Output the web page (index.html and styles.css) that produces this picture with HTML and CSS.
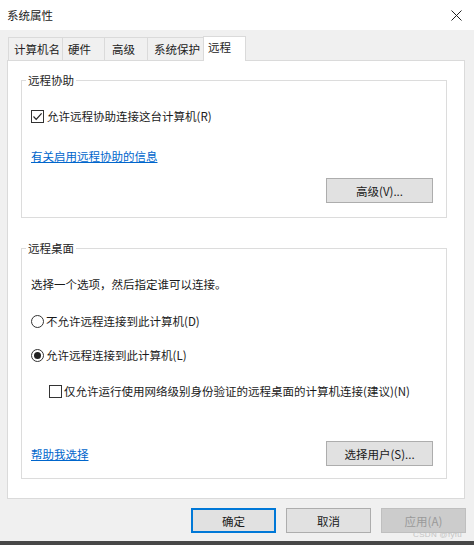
FILE: index.html
```html
<!DOCTYPE html>
<html lang="zh-CN">

<head>
    <meta charset="UTF-8">
    <title>系统属性</title>
    <link rel="stylesheet" href="styles.css">
</head>

<body>
    <div class="window">
        <div class="titlebar">
            <span class="title">系统属性</span>
            <svg class="close" width="11" height="11" viewBox="0 0 11 11">
                <path d="M0.5 0.5L10.5 10.5M10.5 0.5L0.5 10.5" stroke="#222" stroke-width="1" fill="none" />
            </svg>
        </div>

        <div class="content">
            <div class="tabs">
                <div class="tab tab-1">计算机名</div>
                <div class="tab tab-2">硬件</div>
                <div class="tab tab-3">高级</div>
                <div class="tab tab-4">系统保护</div>
                <div class="tab active">远程</div>
            </div>

            <div class="panel">
                <!-- 远程协助 -->
                <fieldset class="group group-assist">
                    <legend>远程协助</legend>
                    <label class="option">
                        <span class="checkbox checked">
                            <svg width="11" height="11" viewBox="0 0 11 11">
                                <path d="M1.5 5.5L4.2 8.3L9.6 2.4" stroke="#222" stroke-width="1.2" fill="none" />
                            </svg>
                        </span>
                        允许远程协助连接这台计算机(R)
                    </label>
                    <a class="link link-info" href="#">有关启用远程协助的信息</a>
                    <div class="row-end">
                        <button class="btn">高级(V)...</button>
                    </div>
                </fieldset>

                <!-- 远程桌面 -->
                <fieldset class="group group-desktop">
                    <legend>远程桌面</legend>
                    <p class="hint">选择一个选项，然后指定谁可以连接。</p>
                    <label class="option option-radio1">
                        <span class="radio"></span>
                        不允许远程连接到此计算机(D)
                    </label>
                    <label class="option option-radio2">
                        <span class="radio checked"></span>
                        允许远程连接到此计算机(L)
                    </label>
                    <label class="option option-nla">
                        <span class="checkbox"></span>
                        仅允许运行使用网络级别身份验证的远程桌面的计算机连接(建议)(N)
                    </label>
                    <div class="row-split">
                        <a class="link" href="#">帮助我选择</a>
                        <button class="btn">选择用户(S)...</button>
                    </div>
                </fieldset>
            </div>

            <div class="footer">
                <button class="btn btn-default">确定</button>
                <button class="btn">取消</button>
                <button class="btn btn-disabled">应用(A)</button>
                <span class="watermark">CSDN @fyfu</span>
            </div>
        </div>
    </div>
    <div class="taskbar"></div>
</body>

</html>
```

FILE: styles.css
```css
* {
    padding: 0px;
    margin: 0px;
    box-sizing: border-box;
}

body {
    width: 474px;
    height: 545px;
    overflow: hidden;
    background: #f0f0f0;
    font-family: "Noto Sans CJK SC", "Microsoft YaHei", sans-serif;
    font-size: 11.5px;
    line-height: 16px;
    color: #1a1a1a;
}

.window {
    height: 541px;
    display: flex;
    flex-direction: column;
    background: #f0f0f0;
}

.titlebar {
    height: 30px;
    background: #fff;
    display: flex;
    align-items: center;
    justify-content: space-between;
    padding: 0 12px 0 7px;
}

.title {
    color: #222;
}

.content {
    position: relative;
    flex: 1;
    padding: 0 9px 0 7px;
}

.tabs {
    display: flex;
    align-items: flex-end;
    height: 30px;
    padding-left: 1px;
}

.tab {
    height: 23px;
    padding: 3px 0 0 5px;
    border: 1px solid #dadada;
    border-bottom: none;
    border-right: none;
    background: #f0f0f0;
    color: #222;
    white-space: nowrap;
}

.tab-1 { width: 54px; }
.tab-2 { width: 42px; }
.tab-3 { width: 43px; padding-left: 7px; }
.tab-4 { width: 56px; padding-left: 6px; }

.tab.active {
    width: 43px;
    height: 25px;
    margin-bottom: -1px;
    padding: 2px 0 0 4px;
    background: #fff;
    border-right: 1px solid #dadada;
    position: relative;
    z-index: 1;
}

.panel {
    height: 439px;
    background: #fff;
    border: 1px solid #dadada;
    padding: 11px 17px 0 13px;
}

.group {
    border: 1px solid #dcdcdc;
    min-width: 0;
    padding: 20px 13px 14px 9px;
}

.group legend {
    padding: 0 2px;
    margin-left: -5px;
    line-height: 16px;
    color: #222;
}

.group-desktop {
    margin-top: 22px;
    padding-bottom: 12px;
}

.option {
    display: flex;
    align-items: center;
    height: 16px;
    white-space: nowrap;
}

.checkbox {
    width: 13px;
    height: 13px;
    border: 1px solid #333;
    background: #fff;
    margin-right: 3px;
    display: flex;
    align-items: center;
    justify-content: center;
    flex-shrink: 0;
}

.radio {
    width: 13px;
    height: 13px;
    border: 1px solid #333;
    border-radius: 50%;
    background: #fff;
    margin-right: 2px;
    display: flex;
    align-items: center;
    justify-content: center;
    flex-shrink: 0;
}

.radio.checked::after {
    content: "";
    width: 7px;
    height: 7px;
    border-radius: 50%;
    background: #222;
}

.link {
    display: inline-block;
    color: #0066cc;
    text-decoration: underline;
    line-height: 16px;
}

.link-info {
    margin-top: 24px;
}

.row-end {
    display: flex;
    justify-content: flex-end;
    margin-top: 14px;
}

.btn {
    width: 107px;
    height: 25px;
    font-family: inherit;
    font-size: 11.5px;
    color: #1a1a1a;
    background: #e1e1e1;
    border: 1px solid #adadad;
}

.hint {
    height: 16px;
}

.option-radio1 { margin-top: 21px; }
.option-radio2 { margin-top: 18px; }
.option-nla { margin-top: 20px; padding-left: 18px; }
.option-nla .checkbox { margin-right: 2px; }

.row-split {
    display: flex;
    justify-content: space-between;
    align-items: center;
    margin-top: 42px;
}

.footer {
    display: flex;
    justify-content: flex-end;
    gap: 10px;
    margin-top: 9px;
}

.footer .btn {
    width: 85px;
}

.btn-default {
    border-color: #0078d7;
    box-shadow: inset 0 0 0 1px #0078d7;
}

.btn-disabled {
    background: #cccccc;
    border-color: #bfbfbf;
    color: #9a9a9a;
    margin-right: -1px;
}

.watermark {
    position: absolute;
    right: 12px;
    bottom: 2px;
    font-family: "Liberation Sans", sans-serif;
    font-size: 8px;
    line-height: 9px;
    color: #c4c4c4;
    letter-spacing: 0.3px;
}

.taskbar {
    height: 4px;
    background: #474747;
}
```
